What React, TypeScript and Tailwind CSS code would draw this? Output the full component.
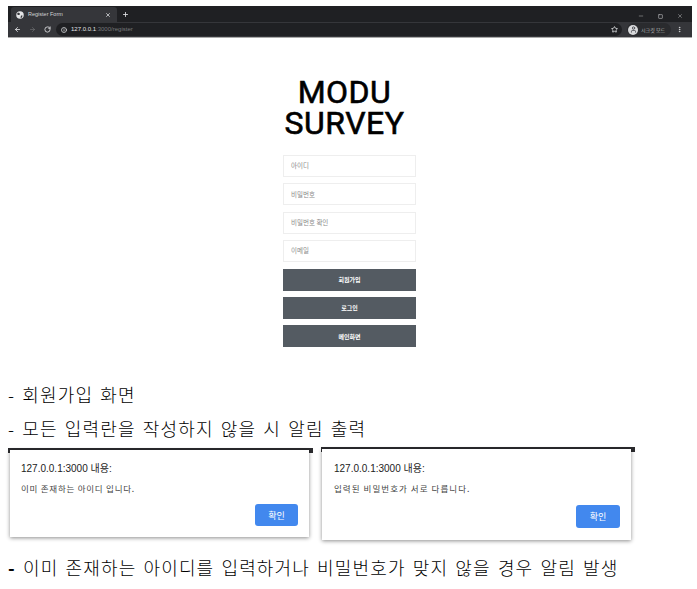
import React from 'react';
import { ArrowLeft, ArrowRight, Info, Minus, MoreVertical, Plus, RotateCw, Square, Star, User, X } from 'lucide-react';

const KO = 'font-["Noto_Sans_CJK_KR","Noto_Sans",sans-serif]';
const LATIN_KO = 'font-["Liberation_Sans","Noto_Sans_CJK_KR",sans-serif]';

const FIELDS = ['아이디', '비밀번호', '비밀번호 확인', '이메일'];
const BUTTONS = ['회원가입', '로그인', '메인화면'];

const TabGlobe = () => (
    <svg width="8" height="8" viewBox="0 0 16 16">
        <circle cx="8" cy="8" r="7.5" fill="#e4e5e6" />
        <path d="M4 3l4 2-1 3-3 0-2-2zM10 9l3 0-1 4-3 1z" fill="#35363a" />
    </svg>
);

const BrowserBar = () => (
    <div className="mx-2 w-[684px] h-[32px] flex flex-col bg-[#202124] border-b border-[#a9a9a9]">
        <div className="h-[16px] flex items-end bg-[#1f2023]">
            <div className="ml-[3px] w-[106px] h-[15px] bg-[#35363a] rounded-t-[3px] flex items-center pl-[5px] pr-[6px] gap-[4px]">
                <TabGlobe />
                <span className={`${LATIN_KO} text-[5.5px] text-[#d2d3d5] flex-1`}>Register Form</span>
                <X size={6} strokeWidth={3} className="text-[#dcdde0]" />
            </div>
            <Plus size={7} strokeWidth={3} className="ml-[5px] mb-[4px] text-[#dcdde0]" />
            <div className="ml-auto flex items-center gap-[14px] pr-[9px] mb-[3px] text-[#b8b9bb]">
                <Minus size={6} />
                <Square size={5} strokeWidth={3} />
                <X size={6} />
            </div>
        </div>
        <div className="h-[15px] bg-[#35363a] flex items-center pl-[6px] pr-[9px]">
            <ArrowLeft size={7} strokeWidth={3} className="text-[#d8d9db]" />
            <ArrowRight size={7} className="ml-[8px] text-[#77787b]" />
            <RotateCw size={7} strokeWidth={3} className="ml-[8px] text-[#d8d9db]" />
            <div className="ml-[5px] flex-1 h-[13px] bg-[#1f2023] rounded-full flex items-center pl-[5px] pr-[4px]">
                <Info size={6} strokeWidth={3} className="text-[#dcdde0]" />
                <span className={`${LATIN_KO} ml-[4px] text-[6px] text-[#e2e3e5]`}>127.0.0.1</span>
                <span className={`${LATIN_KO} text-[6px] text-[#77787b]`}>:3000/register</span>
                <Star size={7} strokeWidth={3} className="ml-auto text-[#d8d9db]" />
            </div>
            <div className="ml-[5px] w-[44px] h-[13px] bg-[#2a2b2e] rounded-full flex items-center">
                <span className="w-[10px] h-[10px] ml-[1px] rounded-full bg-[#d8d9db] flex items-center justify-center">
                    <User size={7} strokeWidth={3} className="text-[#44454a]" />
                </span>
                <span className={`${KO} ml-[3px] text-[5px] text-[#b9babc] whitespace-nowrap`}>시크릿 모드</span>
            </div>
            <MoreVertical size={7} strokeWidth={3} className="ml-[5px] text-[#d8d9db]" />
        </div>
    </div>
);

const RegisterForm = () => (
    <div className="mt-[39px] ml-[283px] w-[133px] flex flex-col">
        <h1 className='font-["Roboto",sans-serif] font-normal [-webkit-text-stroke:0.6px_black] text-[32px] leading-[31px] tracking-[0.5px] text-black text-center whitespace-nowrap -ml-[5px] mr-[5px]'>
            MODU
            <br />
            SURVEY
        </h1>
        <div className="mt-[16px] flex flex-col gap-[6.4px]">
            {FIELDS.map((label) => (
                <div key={label} className="h-[22px] bg-white border border-[#eeeeee] flex items-center pl-[7px]">
                    <span className={`${KO} text-[6.5px] text-[#8a8a8a]`}>{label}</span>
                </div>
            ))}
            {BUTTONS.map((label) => (
                <div key={label} className="h-[22px] bg-[#545b62] flex items-center justify-center">
                    <span className={`${KO} text-[6px] font-bold text-white`}>{label}</span>
                </div>
            ))}
        </div>
    </div>
);

const Note = ({ text, boldDash, className }: { text: string; boldDash?: boolean; className?: string }) => (
    <p className={`${KO} font-light text-[18px] leading-[26px] tracking-[1.15px] [word-spacing:2px] text-black whitespace-pre ${className ?? ''}`}>
        <span className={boldDash ? 'font-bold' : ''}>-</span> {text}
    </p>
);

interface AlertProps {
    message: string;
    barClass: string;
    boxClass: string;
    messageClass: string;
    buttonClass: string;
}

const AlertBox = ({ message, barClass, boxClass, messageClass, buttonClass }: AlertProps) => (
    <div className={`pt-[2px] bg-[linear-gradient(#2b2b2e_5px,transparent_5px)] ${barClass}`}>
        <div className={`bg-white shadow-[0_1px_4px_rgba(0,0,0,0.45)] flex flex-col ${boxClass}`}>
            <div className={`${LATIN_KO} text-[10px] leading-[14px] text-[#222222]`}>127.0.0.1:3000 내용:</div>
            <div className={`${KO} mt-[5px] text-[8.5px] leading-[14px] text-[#444444] ${messageClass}`}>{message}</div>
            <div className={`${KO} self-end mt-auto bg-[#4288ee] rounded-[3px] text-white text-[9px] flex items-center justify-center ${buttonClass}`}>
                확인
            </div>
        </div>
    </div>
);

export default function App() {
    return (
        <div className="w-[697px] h-[589px] bg-white overflow-hidden pt-[6px]">
            <BrowserBar />
            <RegisterForm />
            <div className="mt-[34px] pl-[8px]">
                <Note text="회원가입 화면" />
                <Note text="모든 입력란을 작성하지 않을 시 알림 출력" className="mt-[8px]" />
            </div>
            <div className="mt-[6px] flex items-start">
                <AlertBox
                    message="이미 존재하는 아이디 입니다."
                    barClass="mt-[1px] ml-[8px] w-[305px]"
                    boxClass="ml-[2px] w-[299px] h-[87px] pl-[11px] pr-[11px] pt-[12px] pb-[11px]"
                    messageClass="tracking-[0.75px]"
                    buttonClass="w-[43px] h-[22px]"
                />
                <AlertBox
                    message="입력된 비밀번호가 서로 다릅니다."
                    barClass="ml-[8px] w-[314px]"
                    boxClass="ml-[1px] w-[309px] h-[91px] pl-[12px] pr-[11px] pt-[13px] pb-[12px]"
                    messageClass="tracking-[1.05px]"
                    buttonClass="w-[44px] h-[23px]"
                />
            </div>
            <Note text="이미 존재하는 아이디를 입력하거나 비밀번호가 맞지 않을 경우 알림 발생" boldDash className="mt-[14px] pl-[8px]" />
        </div>
    );
}
